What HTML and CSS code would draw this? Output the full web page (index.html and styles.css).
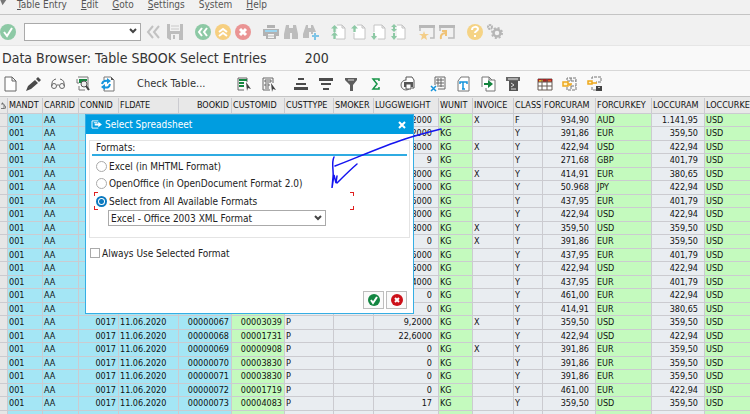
FILE: index.html
```
<!DOCTYPE html>
<html lang="en">
<head>
  <meta charset="UTF-8" />
  <meta name="viewport" content="width=device-width, initial-scale=1.0"/>
  <title>Data Browser: Table SBOOK Select Entries</title>
  <link rel="stylesheet" href="styles.css">
</head>
<body>
  <svg class="defs" width="0" height="0">
    <symbol id="page" viewBox="0 0 16 16"><path d="M3 1h7l4 4v10H3zM10 1v4h4" fill="#fff" stroke="currentColor"/></symbol>
    <symbol id="binoculars" viewBox="0 0 16 16"><path d="M3 1h3v3h4V1h3l2 9v5H9V9H7v6H1v-5z" fill="currentColor"/></symbol>
    <symbol id="up" viewBox="0 0 6 6"><path d="M3 0l3 3H4v3H2V3H0z" fill="currentColor"/></symbol>
    <symbol id="key" viewBox="0 0 16 16"><path d="M5 4V2h9v12h-3M5 11v3h6M5 5h9M9 10h5M9 2v3M9 10v4" fill="none" stroke="#777" stroke-dasharray="3 1"/><path d="M1 6h5v4H1zM6 8h4M8 8v2" fill="#fff3c4" stroke="#eea81c" stroke-width="1.5"/></symbol>
  </svg>

  <nav class="menu-bar">
    <svg class="menu-mark" viewBox="0 0 10 8"><path d="M0 0h8L3 7zM0 2h6" fill="#777"/></svg>
    <a href="#"><u>T</u>able Entry</a>
    <a href="#"><u>E</u>dit</a>
    <a href="#"><u>G</u>oto</a>
    <a href="#"><u>S</u>ettings</a>
    <a href="#">S<u>y</u>stem</a>
    <a href="#"><u>H</u>elp</a>
  </nav>

  <div class="system-bar">
    <button type="button" aria-label="Enter"><svg viewBox="0 0 16 16"><circle cx="8" cy="8" r="8" fill="#8dc9a5"/><path d="M4 8l3 4 5-8" fill="none" stroke="#fff" stroke-width="2"/></svg></button>
    <div class="combo command">
      <input type="text" aria-label="Command">
      <svg viewBox="0 0 8 6"><path d="M1 1l3 3 3-3" fill="none" stroke="#444" stroke-width="2"/></svg>
    </div>
    <button type="button" aria-label="Collapse"><svg viewBox="0 0 16 16"><path d="M8 2L3 8l5 6M14 2L9 8l5 6" fill="none" stroke="#c2c2c2" stroke-width="2"/></svg></button>
    <button type="button" class="save" aria-label="Save"><svg viewBox="0 0 16 16"><path d="M0 0h16v16H3l-3-2z" fill="#bdbdbd"/><path d="M3 0h10v7H3zM4 10h8v6H4z" fill="#f1f1f1"/><path d="M4 2h8M4 5h8" stroke="#c9c9c9"/><path d="M6 11h2v4H6z" fill="#bdbdbd"/></svg></button>
    <button type="button" class="split" aria-label="Back"><svg viewBox="0 0 16 16"><circle cx="8" cy="8" r="8" fill="#8dc9a5"/><path d="M7 4L4 8l3 4M12 4L9 8l3 4" fill="none" stroke="#fff" stroke-width="2"/></svg></button>
    <button type="button" aria-label="Exit"><svg viewBox="0 0 16 16"><circle cx="8" cy="8" r="8" fill="#f6cf80"/><path d="M4 8l4-3 4 3M4 12l4-3 4 3" fill="none" stroke="#fff" stroke-width="2"/></svg></button>
    <button type="button" aria-label="Cancel"><svg viewBox="0 0 16 16"><circle cx="8" cy="8" r="8" fill="#ea9494"/><path d="M5 5l6 6M11 5l-6 6" stroke="#fff" stroke-width="3"/></svg></button>
    <button type="button" class="split" aria-label="Print"><svg viewBox="0 0 16 16"><path d="M4 1h8v3H4zM0 5h16v7h-3v3H3v-3H0z" fill="#b2b2b2"/><path d="M2 7h12" stroke="#9cd4ee" stroke-width="2"/><path d="M5 10h6v4H5z" fill="#f3f3f3"/><path d="M5 12h6" stroke="#bbb"/></svg></button>
    <button type="button" class="gray" aria-label="Find"><svg><use href="#binoculars"/></svg></button>
    <button type="button" class="gray" aria-label="Find next"><svg viewBox="0 0 16 16"><path d="M3 1h2v3h3V1h2l3 7h-3v2H8V8H6v6H0v-4z" fill="#bdbdbd"/><path d="M12 9v7M9 12h7" stroke="#7ec4e6" stroke-width="2"/></svg></button>
    <button type="button" class="split pale" aria-label="First page"><svg viewBox="0 0 16 16"><path d="M6 1h5l3 3v11H5M11 1v3h3" fill="#fff" stroke="#c4c4c4"/><use href="#up" x="0" y="1" width="7" height="7"/><use href="#up" x="0" y="8" width="7" height="7"/></svg></button>
    <button type="button" class="pale" aria-label="Previous page"><svg viewBox="0 0 16 16"><path d="M6 1h5l3 3v11H3V9M11 1v3h3" fill="#fff" stroke="#c4c4c4"/><use href="#up" x="0" y="1" width="7" height="7"/></svg></button>
    <button type="button" class="pale" aria-label="Next page"><svg viewBox="0 0 16 16"><path d="M3 8V1h8l3 3v11H7M11 1v3h3" fill="#fff" stroke="#c4c4c4"/><path d="M2 9h2v3h2l-3 4-3-4h2z" fill="currentColor"/></svg></button>
    <button type="button" class="pale" aria-label="Last page"><svg viewBox="0 0 16 16"><path d="M6 1h5l3 3v11H6M11 1v3h3" fill="#fff" stroke="#c4c4c4"/><path d="M3 0l3 3H4v2h2L3 8 0 5h2V3H0zM2 9h2v3h2l-3 4-3-4h2z" fill="currentColor"/></svg></button>
    <button type="button" class="split" aria-label="New session"><svg viewBox="0 0 16 16"><path d="M0 1h16v3H0z" fill="#b8b8b8"/><path d="M1 4v3M15 4v10h-4" fill="none" stroke="#bbb" stroke-width="1.5"/><path d="M5 7l1 3h4l-3 2 1 4-3-2-3 2 1-4-3-2h4z" fill="#f3cd88"/></svg></button>
    <button type="button" aria-label="Create shortcut"><svg viewBox="0 0 16 16"><path d="M0 1h16v3H0z" fill="#b8b8b8"/><path d="M1 4v3M15 4v10H9" fill="none" stroke="#bbb" stroke-width="1.5"/><path d="M2 15q-1-5 4-6M3 7h4v5" fill="none" stroke="#f0c377" stroke-width="2"/></svg></button>
    <button type="button" class="split" aria-label="Help"><svg viewBox="0 0 16 16"><circle cx="8" cy="8" r="8" fill="#f5d385"/><path d="M5 6c0-4 6-4 6-1 0 2-3 2-3 4M8 11v2" fill="none" stroke="#fff" stroke-width="2"/></svg></button>
    <button type="button" aria-label="Customize"><svg viewBox="0 0 16 16"><circle cx="10" cy="9" r="3.5" fill="none" stroke="#b6b6b6" stroke-width="2.5"/><circle cx="10" cy="9" r="5" fill="none" stroke="#b6b6b6" stroke-width="2" stroke-dasharray="2 1.93"/><circle cx="3" cy="3" r="2" fill="none" stroke="#b6b6b6" stroke-width="2" stroke-dasharray="2 .5"/></svg></button>
  </div>

  <h1 class="title-bar">Data Browser: Table SBOOK Select Entries <span>200</span></h1>

  <div class="app-bar">
    <button type="button" aria-label="Create"><svg><use href="#page"/></svg></button>
    <button type="button" aria-label="Change"><svg viewBox="0 0 16 16"><path d="M1 15l2-5 7-6 3 3-7 6zM11 3l2-2 3 3-2 2z" fill="#4a4a4a"/></svg></button>
    <button type="button" aria-label="Display"><svg viewBox="0 0 16 16"><path d="M6 3Q1 4 2 10M14 10q1-6-4-7" fill="none" stroke="#666"/><circle cx="4" cy="10" r="2.5" fill="none" stroke="#666"/><circle cx="12" cy="10" r="2.5" fill="none" stroke="#666"/><path d="M7 9h2" stroke="#666"/></svg></button>
    <button type="button" aria-label="Check table entries"><svg viewBox="0 0 16 16"><path d="M3 1h10v13M2 3v4h2M4 10v4h6" fill="none" stroke="#777"/><path d="M4 4h8M4 6h5" stroke="#15863f" stroke-width="2"/><circle cx="9" cy="8" r="3" fill="#eee" stroke="#555"/><path d="M11 10l3 4" stroke="#444" stroke-width="2"/></svg></button>
    <button type="button" aria-label="Refresh"><svg viewBox="0 0 16 16"><path d="M4 4V1h7l3 3v11H4v-2" fill="#fff" stroke="#777"/><path d="M11 1v3h3" fill="#555"/><path d="M2 8q1-4 6-3M10 8q-1 5-6 3" fill="none" stroke="#1594dc" stroke-width="2"/><path d="M7 2l4 3-4 3zM5 8l-4 3 4 3z" fill="#1594dc"/></svg></button>
    <button type="button" class="text-button">Check Table...</button>
    <button type="button" aria-label="Select all"><svg viewBox="0 0 16 16"><path d="M11 6V2H2v12h6" fill="none" stroke="#666"/><path d="M3 4h8M3 7h5M3 10h5" stroke="#15863f" stroke-width="2"/><path d="M10 6l5 7-3-1-1 3z" fill="#444"/></svg></button>
    <button type="button" aria-label="Deselect all"><svg viewBox="0 0 16 16"><path d="M12 7V2H2v12h7M4 4h6v2H4zM4 8h4v2H4zM4 12h4" fill="none" stroke="#666"/><path d="M10 7l5 7-3-1-1 3z" fill="#444"/></svg></button>
    <button type="button" class="split" aria-label="Sort ascending"><svg viewBox="0 0 16 16"><path d="M5 2h6v2H5zM3 7h10v2H3zM1 11h14v3H1z" fill="#4b4b4b"/></svg></button>
    <button type="button" aria-label="Sort descending"><svg viewBox="0 0 16 16"><path d="M1 2h14v3H1zM3 7h10v2H3zM5 12h6v2H5z" fill="#4b4b4b"/></svg></button>
    <button type="button" aria-label="Filter"><svg viewBox="0 0 16 16"><path d="M2 2h12v2l-4 5v6H7V9L2 4z" fill="#5e5e5e"/><path d="M5 4h6" stroke="#ddd"/></svg></button>
    <button type="button" aria-label="Total"><svg viewBox="0 0 16 16"><path d="M11 5V3H5l4 5-4 5h6v-2" fill="none" stroke="#169447" stroke-width="1.5"/></svg></button>
    <button type="button" class="split" aria-label="Print"><svg viewBox="0 0 16 16"><circle cx="6" cy="9" r="5" fill="none" stroke="#666"/><path d="M6 4V1h6l2 3v8h-2" fill="#fff" stroke="#555"/><path d="M4 6h9v5H4z" fill="#555"/><path d="M6 8h5v5H6z" fill="#fff" stroke="#555"/></svg></button>
    <button type="button" class="split-small" aria-label="Excel view"><svg viewBox="0 0 16 16"><path d="M5 9V1h10v12H8M6 4h8M6 7h8M7 10h7M8 2v7M11 2v9" fill="none" stroke="#666"/><path d="M1 10l5 5M6 10l-5 5" stroke="#1594dc" stroke-width="1.5"/></svg></button>
    <button type="button" aria-label="Word processing"><svg viewBox="0 0 16 16"><path d="M3 5l3-4h8v14H3z" fill="#fff" stroke="#777"/><path d="M5 8V6h7v2M8 6v7M7 13h3" fill="none" stroke="#1594dc" stroke-width="1.5"/></svg></button>
    <button type="button" aria-label="Local file"><svg viewBox="0 0 16 16"><path d="M2 11V1h7l3 3h3v11H6v-3M9 1v3h3" fill="#fff" stroke="#777"/><path d="M4 7h4V4l5 4-5 4V9H4z" fill="#12843d"/></svg></button>
    <button type="button" aria-label="Mail recipient"><svg viewBox="0 0 16 16"><path d="M1 1h14v4H1z" fill="#666"/><path d="M3 3h10" stroke="#eee"/><path d="M4 5h9v10H4z" fill="#555"/><path d="M6 7l3 2-3 2M6 13h5" fill="none" stroke="#ddd"/></svg></button>
    <button type="button" class="split" aria-label="Change layout"><svg viewBox="0 0 16 16"><path d="M1 3h14v11H1z" fill="#fff" stroke="#665a52"/><path d="M1 3h14v3H1z" fill="#a82222"/><path d="M2 4h4v2H2z" fill="#f0b428"/><path d="M11 4h3v2h-3z" fill="#d9592c"/><path d="M1 6h14M1 10h14M5 3v11M10 3v11" stroke="#665a52"/></svg></button>
    <button type="button" aria-label="Choose layout"><svg><use href="#key"/></svg></button>
    <button type="button" aria-label="Save layout"><svg viewBox="0 0 16 16"><path d="M5 3V1h9v5H9M5 11v3h4" fill="none" stroke="#777" stroke-dasharray="3 1"/><path d="M1 5h4v3H1zM5 7h5" fill="#fff3c4" stroke="#eea81c" stroke-width="1.5"/><path d="M9 10h6v5H9z" fill="#444"/><path d="M11 11h2v1h-2z" fill="#bbb"/></svg></button>
  </div>

  <main class="grid-area">
    <table class="entries">
      <colgroup>
        <col class="w-mark"><col class="w-short"><col class="w-medium"><col class="w-conn"><col class="w-date">
        <col class="w-number"><col class="w-number"><col class="w-type"><col class="w-conn"><col class="w-weight">
        <col class="w-unit"><col class="w-invoice"><col class="w-class"><col class="w-number"><col class="w-currency">
        <col class="w-number"><col class="w-currency">
      </colgroup>
      <thead>
        <tr>
          <th><svg class="lock" viewBox="0 0 8 10"><path d="M0 3h4v6M0 9h5M2 3V1M4 5l2 1v3" fill="none" stroke="#555"/></svg></th>
          <th>MANDT</th><th>CARRID</th><th>CONNID</th><th>FLDATE</th>
          <th class="num">BOOKID</th><th>CUSTOMID</th><th>CUSTTYPE</th><th>SMOKER</th><th>LUGGWEIGHT</th>
          <th>WUNIT</th><th>INVOICE</th><th>CLASS</th><th>FORCURAM</th><th>FORCURKEY</th>
          <th>LOCCURAM</th><th>LOCCURKEY</th>
        </tr>
      </thead>
      <tbody id="entries-body"></tbody>
    </table>
  </main>

  <form class="dialog" role="dialog" aria-labelledby="dialog-title">
    <div class="dialog-title">
      <svg viewBox="0 0 12 10"><path d="M8 1H1v8h7M3 3h4" fill="none" stroke="#fff"/><path d="M4 4h4V2l4 3-4 3V6H4z" fill="#fff"/></svg>
      <span id="dialog-title">Select Spreadsheet</span>
      <button type="button" aria-label="Close"><svg viewBox="0 0 8 8"><path d="M1 1l6 6M7 1L1 7" stroke="#fff" stroke-width="2"/></svg></button>
    </div>
    <div class="dialog-body">
      <fieldset class="formats">
        <div class="formats-heading">Formats:</div>
        <label class="option"><input type="radio" name="format">Excel (in MHTML Format)</label>
        <label class="option"><input type="radio" name="format">OpenOffice (in OpenDocument Format 2.0)</label>
        <label class="option focused"><input type="radio" name="format" checked>Select from All Available Formats
          <svg class="corner top-left" viewBox="0 0 4 4"><path d="M0 4V0h4"/></svg>
          <svg class="corner top-right" viewBox="0 0 4 4"><path d="M0 0h4v4"/></svg>
          <svg class="corner bottom-left" viewBox="0 0 4 4"><path d="M0 0v4h4"/></svg>
          <svg class="corner bottom-right" viewBox="0 0 4 4"><path d="M4 0v4H0"/></svg>
        </label>
        <div class="combo format-list">
          <select aria-label="Available formats"><option>Excel - Office 2003 XML Format</option></select>
          <svg viewBox="0 0 8 6"><path d="M1 1l3 3 3-3" fill="none" stroke="#444" stroke-width="2"/></svg>
        </div>
      </fieldset>
      <label class="always"><input type="checkbox">Always Use Selected Format</label>
      <div class="dialog-actions">
        <button type="submit" aria-label="Continue"><svg viewBox="0 0 12 12"><circle cx="6" cy="6" r="6" fill="#128641"/><path d="M3 6l2 3 4-6" fill="none" stroke="#fff" stroke-width="2"/></svg></button>
        <button type="button" aria-label="Cancel"><svg viewBox="0 0 12 12"><circle cx="6" cy="6" r="6" fill="#cc1019"/><path d="M4 4l4 4M8 4L4 8" stroke="#fff" stroke-width="2"/></svg></button>
      </div>
    </div>
  </form>

  <!-- hand-drawn pointer -->
  <svg class="pointer" viewBox="0 0 112 62"><path d="M111 1Q87 7 75 11C48 20 24 31 5 38M4 29C1 35 4 43 3 49L2 60 4 47 6 55 7 48M7 55C13 49 20 42 27 36"/></svg>

  <script src="script.js"></script>
</body>
</html>
```
FILE: styles.css
```
* {
  box-sizing: border-box;
}
body {
  position: relative;
  margin: 0;
  height: 100vh;
  overflow: hidden;
  background: #f9f9f9;
  color: #222;
  font-family: "DejaVu Sans Condensed", "Noto Sans", sans-serif;
  font-size: 10px;
}
button,
input,
select {
  font: inherit;
  color: inherit;
}
button {
  padding: 0;
  border: none;
  background: none;
}
svg {
  display: block;
}
.defs {
  position: absolute;
}
.menu-bar {
  display: flex;
  gap: 14px;
  height: 15px;
  padding-left: 3px;
  line-height: 10px;
  background: #f1f1f1;
  border-bottom: 1px solid #c4c4c4;
}
.menu-bar a {
  color: #555;
  text-decoration: none;
}
.menu-mark {
  width: 8px;
  height: 6px;
  margin: 0 -8px 0 -3px;
}
.menu-mark + a {
  margin-left: 3px;
}
.system-bar,
.app-bar {
  display: flex;
  align-items: center;
}
.system-bar {
  height: 31px;
  padding-top: 4px;
  gap: 4px;
  background: #f1f1f1;
  border-bottom: 1px solid #e6e6e6;
}
.system-bar button svg,
.app-bar button svg {
  width: 16px;
  height: 16px;
  margin: 0 auto;
}
.system-bar .save {
  margin-left: 2px;
}
.system-bar .split {
  margin-left: 8px;
}
.gray {
  color: #bdbdbd;
}
.pale {
  color: #8dc9a5;
}
.combo {
  position: relative;
}
.combo svg {
  position: absolute;
  right: 4px;
  top: 5px;
  width: 8px;
  height: 6px;
  pointer-events: none;
}
.combo input,
.combo select {
  display: block;
  width: 100%;
  height: 100%;
  padding: 0 2px;
  border: 1px solid #aaa;
  border-radius: 0;
  background: #fff;
  appearance: none;
}
.command {
  width: 117px;
  height: 18px;
  margin-left: 4px;
}
.title-bar {
  height: 25px;
  margin: 0;
  padding-left: 2px;
  line-height: 24px;
  font-size: 14px;
  font-weight: normal;
  color: #333;
  border-bottom: 1px solid #d8d8d8;
}
.title-bar span {
  margin-left: 34px;
}
.app-bar {
  height: 26px;
  border-bottom: 1px solid #c4c4c4;
  color: #666;
}
.app-bar button {
  width: 25px;
  flex: none;
}
.app-bar button:first-child {
  width: 20px;
}
.app-bar .split {
  margin-left: 7px;
}
.app-bar .split-small {
  margin-left: 5px;
}
.app-bar .text-button {
  width: auto;
  margin: 0 26px 0 17px;
  font-size: 11px;
  color: #333;
}
.grid-area {
  padding-top: 1px;
  overflow: hidden;
  background: #e8e8e8;
}
.entries {
  table-layout: fixed;
  width: 761px;
  border-collapse: separate;
  border-spacing: 0;
  font-size: 9px;
  color: #111;
}
.w-mark { width: 8px; }
.w-short { width: 35px; }
.w-medium { width: 36px; }
.w-conn { width: 40px; }
.w-date { width: 60px; }
.w-number { width: 53px; }
.w-type { width: 49px; }
.w-weight { width: 65px; }
.w-unit { width: 34px; }
.w-invoice { width: 41px; }
.w-class { width: 29px; }
.w-currency { width: 56px; }
.entries th,
.entries td {
  height: 13px;
  padding: 0 1px;
  line-height: 12px;
  text-align: left;
  font-weight: normal;
  white-space: nowrap;
  overflow: hidden;
  background: #e9edf1;
  border-right: 1px solid #cbcbd0;
  border-bottom: 1px solid #cbcbd0;
}
.entries tr:nth-child(even) td {
  height: 14px;
  line-height: 13px;
}
.entries th {
  height: 16px;
  line-height: 15px;
  background: #e8e8e8;
}
.entries td:first-child {
  background: #e6e6e6;
}
.entries .key {
  background: #a4e6f5;
}
.entries .link {
  background: #c4fabe;
}
.entries .num {
  text-align: right;
  padding-right: 2px;
}
.entries .amount {
  text-align: right;
  padding-right: 6px;
}
.lock {
  width: 6px;
  height: 9px;
}
.dialog {
  position: absolute;
  left: 85px;
  top: 114px;
  width: 329px;
  background: #fff;
  border: 1px solid #35aee4;
}
.dialog-title {
  display: flex;
  align-items: center;
  gap: 3px;
  height: 19px;
  padding: 0 7px 0 5px;
  color: #fff;
  background: #009de0;
}
.dialog-title svg {
  width: 11px;
  height: 9px;
}
.dialog-title button {
  margin-left: auto;
}
.dialog-title button svg {
  width: 8px;
  height: 8px;
}
.dialog-body {
  padding: 6px 3px 4px;
}
.formats {
  margin: 0;
  padding: 0 2px 11px;
  min-width: 0;
  border: 1px solid #e4e4e4;
}
.formats-heading {
  height: 15px;
  padding-left: 4px;
  line-height: 14px;
  border-bottom: 2px solid #2fabe2;
}
.option,
.always {
  display: flex;
  align-items: center;
  gap: 2px;
}
.option {
  position: relative;
  height: 17px;
  margin-left: 4px;
}
.formats-heading + .option {
  margin-top: 2px;
}
.option input,
.always input {
  appearance: none;
  flex: none;
  width: 11px;
  height: 11px;
  margin: 0;
  background: #fff;
  border: 1px solid #aaa;
}
.option input {
  border-radius: 50%;
}
.option input:checked {
  border: 2px solid #0b79bf;
  background: radial-gradient(#0b79bf 0 2px, #fff 3px);
}
.focused {
  width: 258px;
  height: 18px;
}
.corner {
  position: absolute;
  width: 4px;
  height: 4px;
  fill: none;
  stroke: #e02020;
  stroke-width: 2;
}
.top-left { left: -2px; top: 0; }
.top-right { right: 0; top: 0; }
.bottom-left { left: -2px; bottom: 0; }
.bottom-right { right: 0; bottom: 0; }
.format-list {
  width: 218px;
  height: 16px;
  margin-left: 16px;
}
.always {
  height: 12px;
  margin: 9px 0 0 1px;
}
.always input {
  width: 10px;
  height: 10px;
}
.dialog-actions {
  display: flex;
  justify-content: flex-end;
  gap: 2px;
  margin: 32px 3px 0 0;
}
.dialog-actions button {
  display: grid;
  place-items: center;
  width: 21px;
  height: 18px;
  border: 1px solid #bdbdbd;
  background: #fafafa;
}
.dialog-actions svg {
  width: 12px;
  height: 12px;
}
.pointer {
  position: absolute;
  left: 330px;
  top: 128px;
  width: 112px;
  height: 62px;
  fill: none;
  stroke: #1414f0;
  stroke-width: 1.5;
  stroke-linecap: round;
  pointer-events: none;
}
```
FILE: script.js
```
// flight date, booking and customer per row, then weight, invoice, class, amounts
const rows = [
  ['', '', '', ',2000', 'X', 'F', '934,90', 'AUD', '1.141,95'],
  ['', '', '', ',2000', '', 'Y', '391,86', 'EUR', '359,50'],
  ['', '', '', ',8000', 'X', 'Y', '422,94', 'USD', '422,94'],
  ['', '', '', '9', '', 'Y', '271,68', 'GBP', '401,79'],
  ['', '', '', ',8000', 'X', 'Y', '414,91', 'EUR', '380,65'],
  ['', '', '', ',5000', '', 'Y', '50.968', 'JPY', '422,94'],
  ['', '', '', ',5000', '', 'Y', '437,95', 'EUR', '401,79'],
  ['', '', '', ',8000', '', 'Y', '422,94', 'USD', '422,94'],
  ['', '', '', ',8000', 'X', 'Y', '359,50', 'USD', '359,50'],
  ['', '', '', '0', 'X', 'Y', '391,86', 'EUR', '359,50'],
  ['', '', '', ',5000', '', 'Y', '437,95', 'EUR', '401,79'],
  ['', '', '', ',5000', '', 'Y', '422,94', 'USD', '422,94'],
  ['', '', '', ',4000', '', 'Y', '437,95', 'EUR', '401,79'],
  ['', '', '', '0', '', 'Y', '461,00', 'EUR', '422,94'],
  ['', '', '', '0', '', 'Y', '414,91', 'EUR', '380,65'],
  ['11.06.2020', '00000067', '00003039', '9,2000', 'X', 'Y', '359,50', 'USD', '359,50'],
  ['11.06.2020', '00000068', '00001731', '22,6000', '', 'Y', '422,94', 'USD', '422,94'],
  ['11.06.2020', '00000069', '00000908', '0', 'X', 'Y', '391,86', 'EUR', '359,50'],
  ['11.06.2020', '00000070', '00003830', '0', '', 'Y', '391,86', 'EUR', '359,50'],
  ['11.06.2020', '00000071', '00003830', '0', '', 'Y', '391,86', 'EUR', '359,50'],
  ['11.06.2020', '00000072', '00001719', '0', '', 'Y', '461,00', 'EUR', '422,94'],
  ['11.06.2020', '00000073', '00004083', '17', '', 'Y', '359,50', 'USD', '359,50'],
  null
];

function cell(text, className) {
  return `<td class="${className}">${text}</td>`;
}

document.getElementById('entries-body').innerHTML = rows.map(row => {
  const [date, booking, customer, weight, invoice, flightClass, amount, currency, local] = row || Array(9).fill('');
  const known = date !== '';
  return '<tr>' +
    cell('', '') +
    cell(row ? '001' : '', 'key') +
    cell(row ? 'AA' : '', 'key') +
    cell(known ? '0017' : '', 'key num') +
    cell(date, 'key') +
    cell(booking, 'key num') +
    cell(customer, 'link num') +
    cell(known ? 'P' : '', '') +
    cell('', '') +
    cell(weight, 'amount') +
    cell(row ? 'KG' : '', 'link') +
    cell(invoice, '') +
    cell(flightClass, '') +
    cell(amount, 'amount') +
    cell(currency, 'link') +
    cell(local, 'amount') +
    cell(row ? 'USD' : '', 'link') +
    '</tr>';
}).join('');
```
